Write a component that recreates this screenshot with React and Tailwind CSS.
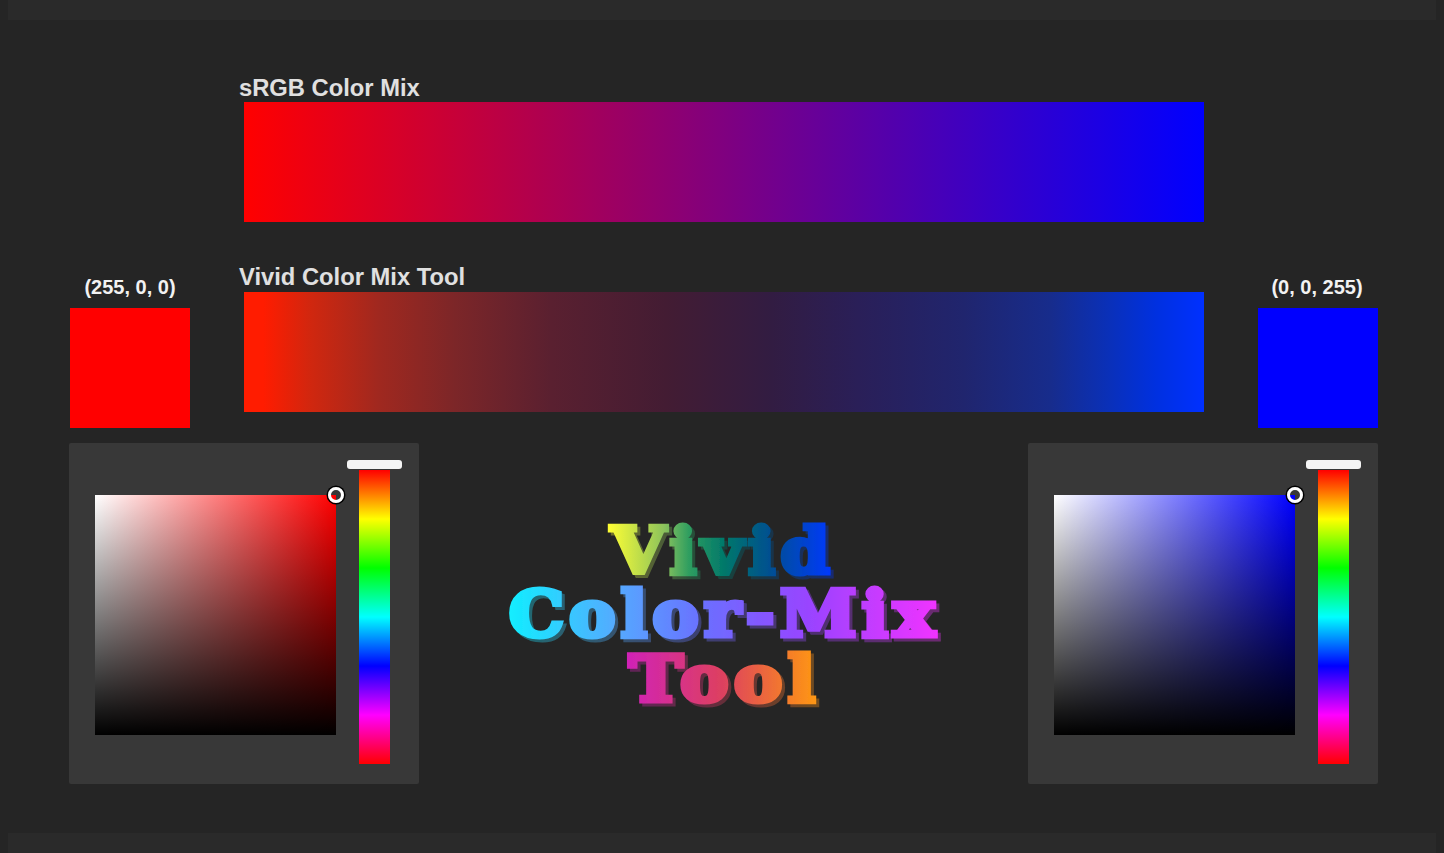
import React from 'react';

const HUE_BAR = 'bg-[linear-gradient(to_bottom,#f00,#ff0,#0f0,#0ff,#00f,#f0f,#f00)]';

const Swatch = ({ label, colorClass, labelClass = '' }) => (
  <div className="flex w-[120px] flex-col items-center">
    <div className={`mb-[7px] text-[20px] leading-[28px] font-bold whitespace-nowrap text-[#f2f2f2] ${labelClass}`}>{label}</div>
    <div className={`h-[120px] w-[120px] ${colorClass}`} />
  </div>
);

const ColorPicker = ({ squareClass }) => (
  <div className="flex h-[341px] w-[350px] items-start rounded-[2px] bg-[#383838] pt-[27px] pl-[26px]">
    <div className={`relative mt-[25px] h-[240px] w-[241px] ${squareClass}`}>
      <div className="absolute -top-[8px] -right-[7.5px] h-[16px] w-[16px] rounded-full border-[3.5px] border-white shadow-[0_0_0_1.5px_#000]" />
    </div>
    <div className={`relative ml-[23px] h-[294px] w-[31px] ${HUE_BAR}`}>
      <div className="absolute -top-[10px] -left-[12px] h-[9px] w-[55px] rounded-[3px] bg-[#f5f5f5]" />
    </div>
  </div>
);

const LogoLine = ({ x, y, length, gradient, children }) => (
  <text
    x={x}
    y={y}
    textLength={length}
    lengthAdjust="spacingAndGlyphs"
    letterSpacing="5"
    fill={`url(#${gradient})`}
    stroke={`url(#${gradient})`}
    strokeWidth="5"
    strokeLinejoin="miter"
  >
    {children}
  </text>
);

const Logo = () => (
  <svg width="470" height="210" viewBox="0 0 470 210" className="mt-[67px] font-['DejaVu_Serif',serif] text-[63px] font-bold">
    <defs>
      <linearGradient id="line1" gradientUnits="userSpaceOnUse" x1="119" x2="343" y1="0" y2="0">
        <stop offset="0" stopColor="#ffff33" />
        <stop offset="0.25" stopColor="#8cc35c" />
        <stop offset="0.36" stopColor="#2f9e60" />
        <stop offset="0.52" stopColor="#00786a" />
        <stop offset="0.72" stopColor="#005090" />
        <stop offset="1" stopColor="#0038ff" />
      </linearGradient>
      <linearGradient id="line2" gradientUnits="userSpaceOnUse" x1="20" x2="448" y1="0" y2="0">
        <stop offset="0" stopColor="#11eeff" />
        <stop offset="0.25" stopColor="#55aaff" />
        <stop offset="0.45" stopColor="#6a70ff" />
        <stop offset="0.7" stopColor="#9944ff" />
        <stop offset="1" stopColor="#f033ff" />
      </linearGradient>
      <linearGradient id="line3" gradientUnits="userSpaceOnUse" x1="137" x2="329" y1="0" y2="0">
        <stop offset="0" stopColor="#d022b8" />
        <stop offset="0.5" stopColor="#dd4060" />
        <stop offset="1" stopColor="#ff9911" />
      </linearGradient>
      <filter id="logoShadow" x="-5%" y="-5%" width="110%" height="110%">
        <feOffset in="SourceGraphic" dx="3" dy="3" result="moved" />
        <feComponentTransfer in="moved" result="faded">
          <feFuncA type="linear" slope="0.35" />
        </feComponentTransfer>
        <feMerge>
          <feMergeNode in="faded" />
          <feMergeNode in="SourceGraphic" />
        </feMerge>
      </filter>
    </defs>
    <g filter="url(#logoShadow)">
      <LogoLine x="122" y="63" length="224" gradient="line1">Vivid</LogoLine>
      <LogoLine x="20" y="126" length="431" gradient="line2">Color-Mix</LogoLine>
      <LogoLine x="140" y="191" length="192" gradient="line3">Tool</LogoLine>
    </g>
  </svg>
);

export default function App() {
  return (
    <div className="flex h-[853px] w-full flex-col overflow-hidden bg-[#252525] font-['Liberation_Sans',Arial,sans-serif]">
      <div className="mx-2 h-5 shrink-0 bg-[#2a2a2a]" />

      <div className="flex-1 pr-[66px] pl-[70px]">
        <div className="pt-[54px] pl-[174px]">
          <div className="-ml-[5px] text-[23.75px] leading-[28px] font-bold text-[#e0e0e0]">sRGB Color Mix</div>
          <div className="h-[120px] w-[960px] bg-[linear-gradient(to_right,#f00,#00f)]" />
        </div>

        <div className="mt-[42px] flex items-end justify-between">
          <Swatch label="(255, 0, 0)" colorClass="bg-[#f00]" />
          <div className="mb-4 w-[960px]">
            <div className="-ml-[5px] text-[23.75px] leading-[26px] font-bold text-[#e0e0e0]">Vivid Color Mix Tool</div>
            <div className="mt-[2px] h-[120px] bg-[linear-gradient(to_right,#ff1c00_0%,#ff1c00_2%,#d0270f_7%,#a0281f_14%,#7c2628_22%,#5a2030_32%,#431c33_44%,#321c42_55%,#2a1f58_64%,#20256e_75%,#172c8c_84%,#0a30b8_90%,#0030e0_95%,#0030ff_100%)]" />
          </div>
          <Swatch label="(0, 0, 255)" colorClass="bg-[#00f]" labelClass="-translate-x-px" />
        </div>

        <div className="mt-[15px] -ml-px flex items-start justify-between">
          <ColorPicker squareClass="bg-[linear-gradient(to_top,#000,transparent),linear-gradient(to_right,#fff,#f00)]" />
          <Logo />
          <ColorPicker squareClass="bg-[linear-gradient(to_top,#000,transparent),linear-gradient(to_right,#fff,#00f)]" />
        </div>
      </div>

      <div className="mx-2 h-5 shrink-0 bg-[#2a2a2a]" />
    </div>
  );
}
